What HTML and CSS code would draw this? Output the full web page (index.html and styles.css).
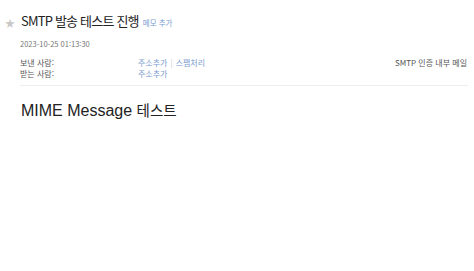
FILE: index.html
```html
<!DOCTYPE html>
<html lang="ko">
<head>
  <meta charset="UTF-8" />
  <meta name="viewport" content="width=device-width, initial-scale=1" />
  <title>SMTP 발송 테스트 진행</title>
  <link rel="stylesheet" href="styles.css">
</head>
<body>
  <div class="mail">
    <div class="subject">
      <span class="star">★</span>
      <h2>SMTP 발송 테스트 진행</h2>
      <a class="memo">메모 추가</a>
    </div>
    <div class="date">2023-10-25 01:13:30</div>

    <div class="people">
      <div class="row">
        <span class="label">보낸 사람:</span>
        <span class="links"><a>주소추가</a><span class="sep">|</span><a>스팸처리</a></span>
        <span class="note">SMTP 인증 내부 메일</span>
      </div>
      <div class="row">
        <span class="label">받는 사람:</span>
        <span class="links"><a>주소추가</a></span>
      </div>
    </div>

    <div class="content">MIME Message <span class="ko">테스트</span></div>
  </div>
</body>
</html>
```

FILE: styles.css
```css
body {
  margin: 0;
  font-family: "Noto Sans CJK KR", "Noto Sans", sans-serif;
  background: #fff;
  color: #333;
}
.mail {
  padding: 12px 6px 0 20px;
}
.subject {
  display: flex;
  align-items: baseline;
  position: relative;
}
.star {
  position: absolute;
  left: -15px;
  top: 3px;
  font-size: 10px;
  color: #c8c8c8;
}
.subject h2 {
  margin: 0 0 0 1px;
  font-size: 13px;
  font-weight: normal;
  color: #222;
  line-height: 18px;
  letter-spacing: -0.8px;
}
.memo {
  margin-left: 4px;
  font-size: 7.5px;
  color: #7a9ccf;
}
.date {
  margin-top: 8px;
  font-size: 7.5px;
  color: #777;
  line-height: 12px;
}
.people {
  margin-top: 7px;
  padding-bottom: 6px;
  border-bottom: 1px solid #eee;
}
.row {
  display: flex;
  font-size: 8px;
  line-height: 11px;
  color: #555;
}
.label {
  width: 118px;
}
.links a {
  color: #7a9ccf;
}
.sep {
  color: #ccc;
  margin: 0 3px;
}
.note {
  margin-left: auto;
  margin-right: 1px;
}
.content {
  margin-top: 12px;
  font-family: "Liberation Sans", "Noto Sans CJK KR", sans-serif;
  font-size: 16px;
  color: #222;
  line-height: 24px;
  padding-left: 1px;
}
.content .ko {
  font-family: "Noto Sans CJK KR", sans-serif;
  font-size: 14.5px;
}
```
